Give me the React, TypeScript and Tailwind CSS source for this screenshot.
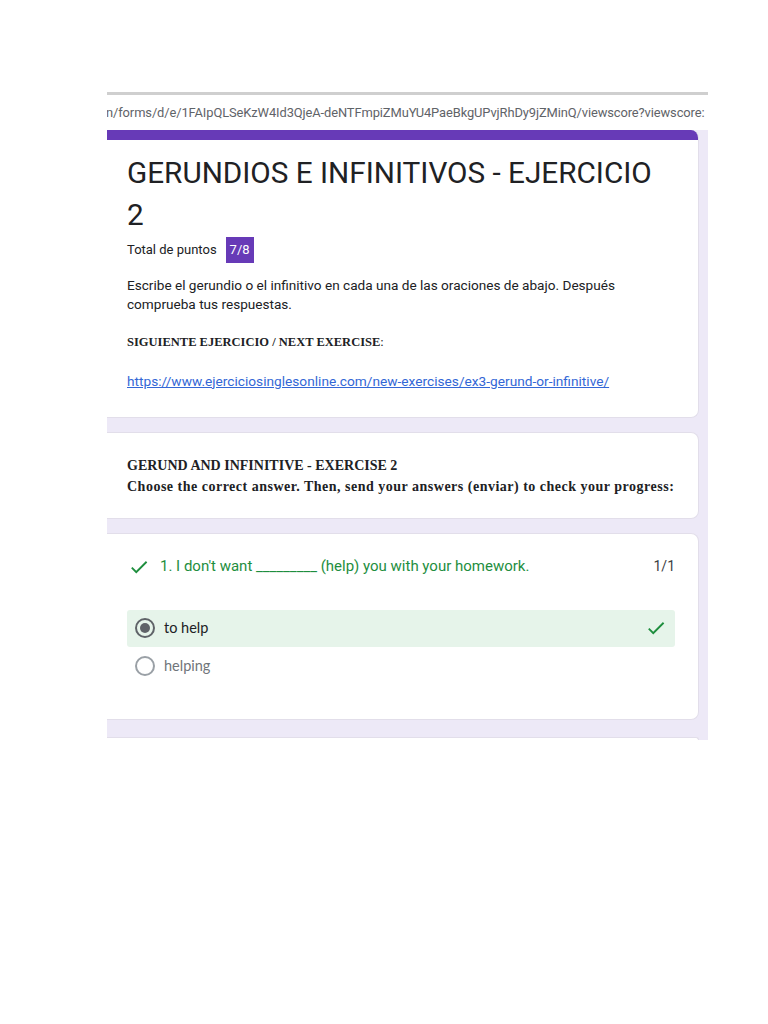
import React from "react";

function MatCheck({ className }: { className?: string }) {
  return (
    <svg viewBox="0 0 24 24" className={className} fill="currentColor" aria-hidden="true">
      <path d="M9 16.17L4.83 12l-1.42 1.41L9 19 21 7l-1.41-1.41z" />
    </svg>
  );
}

function Radio({ checked }: { checked?: boolean }) {
  return checked ? (
    <span className="flex h-[20px] w-[20px] shrink-0 items-center justify-center rounded-full border-2 border-[#5f6368]">
      <span className="h-[10px] w-[10px] rounded-full bg-[#5f6368]" />
    </span>
  ) : (
    <span className="h-[20px] w-[20px] shrink-0 rounded-full border-2 border-[#9aa0a6]" />
  );
}

export default function App() {
  return (
    <div className="min-h-[1024px] w-[768px] bg-white font-['Roboto',sans-serif]">
      <div className="ml-[107px] w-[601px] pt-[92px]">
        <div className="h-[3px] bg-[#cfcfcf]" />
        <div className="flex h-[35px] items-center overflow-hidden whitespace-nowrap text-[12.9px] tracking-[-0.1px] text-[#5f6368] font-['Roboto',sans-serif]">
          <span className="-ml-[1px]">
            n/forms/d/e/1FAIpQLSeKzW4Id3QjeA-deNTFmpiZMuYU4PaeBkgUPvjRhDy9jZMinQ/viewscore?viewscore:
          </span>
        </div>

        <div className="flex flex-col gap-[14px] bg-[#ede9f7] pr-[9px]">
          {/* Card 1 */}
          <div className="overflow-hidden rounded-r-lg border border-t-0 border-l-0 border-[#e2deea] bg-white">
            <div className="h-[10px] bg-[#673ab7]" />
            <div className="pl-[20px] pr-[20px] pt-[12px] pb-[27px]">
              <h1 className="text-[29.7px] font-normal leading-[42px] text-[#202124]">
                GERUNDIOS E INFINITIVOS - EJERCICIO
                <br />2
              </h1>
              <div className="mt-[1px] flex h-[26px] items-center gap-[9px]">
                <span className="text-[13px] text-[#202124]">Total de puntos</span>
                <span className="flex h-[26px] items-center bg-[#673ab7] px-[4px] text-[13px] text-white">
                  7/8
                </span>
              </div>
              <p className="mt-[13px] text-[13.6px] leading-[18.5px] text-[#202124]">
                Escribe el gerundio o el infinitivo en cada una de las oraciones de abajo. Después
                <br />
                comprueba tus respuestas.
              </p>
              <p className="mt-[20px] font-['Liberation_Serif',serif] text-[12.5px] font-bold leading-[18px] text-[#202124]">
                SIGUIENTE EJERCICIO / NEXT EXERCISE<span className="font-normal">:</span>
              </p>
              <p className="mt-[20.5px] text-[13.7px] leading-[18px]">
                <span className="text-[#3367d6] underline">
                  https://www.ejerciciosinglesonline.com/new-exercises/ex3-gerund-or-infinitive/
                </span>
              </p>
            </div>
          </div>

          {/* Card 2 */}
          <div className="rounded-r-lg border border-l-0 border-[#e2deea] bg-white pl-[20px] pr-[20px] pt-[22.5px] pb-[20.5px] font-['Liberation_Serif',serif] text-[14px] font-bold leading-[21px] text-[#202124]">
            <p>GERUND AND INFINITIVE - EXERCISE 2</p>
            <p className="tracking-[0.5px]">
              Choose the correct answer. Then, send your answers (enviar) to check your progress:
            </p>
          </div>

          {/* Card 3 */}
          <div className="rounded-r-lg border border-l-0 border-[#e2deea] bg-white pl-[20px] pr-[23px] pt-[21px] pb-[34px]">
            <div className="flex h-[24px] items-center">
              <MatCheck className="ml-[1px] h-[22px] w-[22px] shrink-0 text-[#1e8e3e]" />
              <span className="ml-[10px] text-[15px] text-[#1e8e3e]">
                1. I don't want _________ (help) you with your homework.
              </span>
              <span className="ml-auto text-[14px] text-[#3c4043]">1/1</span>
            </div>
            <div className="mt-[31px] flex h-[37px] items-center rounded-[3px] bg-[#e6f4ea] pl-[8px] pr-[8px]">
              <Radio checked />
              <span className="ml-[9px] font-['Lato',sans-serif] text-[14.5px] text-[#202124]">to help</span>
              <MatCheck className="ml-auto h-[22px] w-[22px] text-[#1e8e3e]" />
            </div>
            <div className="flex h-[38px] items-center pl-[8px]">
              <Radio />
              <span className="ml-[9px] font-['Lato',sans-serif] text-[14.5px] text-[#70757a]">helping</span>
            </div>
          </div>

          {/* Card 4 stub */}
          <div className="mt-[3px] h-[3px] rounded-tr-lg border-t border-r border-[#e2deea] bg-white" />
        </div>
      </div>
    </div>
  );
}
